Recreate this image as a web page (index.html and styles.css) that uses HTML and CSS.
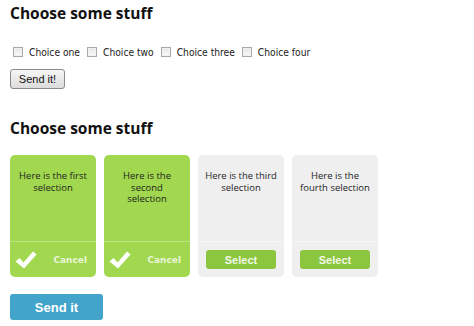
FILE: index.html
```html
<!DOCTYPE html>
<html>
<head>
<meta charset="utf-8">
<link rel="stylesheet" href="styles.css">
</head>
<body>
<div class="page">
  <h1 class="title">Choose some stuff</h1>
  <form class="plain-form">
    <div class="choices">
      <label class="choice"><span class="box"></span>Choice one</label>
      <label class="choice"><span class="box"></span>Choice two</label>
      <label class="choice"><span class="box"></span>Choice three</label>
      <label class="choice"><span class="box"></span>Choice four</label>
    </div>
    <button type="button" class="classic-btn">Send it!</button>
  </form>

  <h2 class="title second">Choose some stuff</h2>
  <div class="cards">
    <div class="card selected">
      <div class="card-text">Here is the first selection</div>
      <div class="card-foot">
        <svg class="check" viewBox="0 0 22 18" width="22" height="18"><path d="M0.5 10.5 L4.5 7 L8.5 11.5 L18 0.5 L21.5 3.5 L9 17.5 Z" fill="#fff"/></svg>
        <span class="cancel">Cancel</span>
      </div>
    </div>
    <div class="card selected">
      <div class="card-text">Here is the second selection</div>
      <div class="card-foot">
        <svg class="check" viewBox="0 0 22 18" width="22" height="18"><path d="M0.5 10.5 L4.5 7 L8.5 11.5 L18 0.5 L21.5 3.5 L9 17.5 Z" fill="#fff"/></svg>
        <span class="cancel">Cancel</span>
      </div>
    </div>
    <div class="card">
      <div class="card-text">Here is the third selection</div>
      <div class="card-foot">
        <span class="select-btn">Select</span>
      </div>
    </div>
    <div class="card">
      <div class="card-text">Here is the fourth selection</div>
      <div class="card-foot">
        <span class="select-btn">Select</span>
      </div>
    </div>
  </div>
  <button type="button" class="blue-btn">Send it</button>
</div>
</body>
</html>
```

FILE: styles.css
```css
html, body {
  margin: 0;
  padding: 0;
  background: #fff;
}
.page {
  padding: 0 10px;
  font-family: "Open Sans", sans-serif;
  color: #222;
}
.title {
  margin: 0;
  font-family: "Open Sans", sans-serif;
  font-weight: bold;
  font-size: 15.5px;
  line-height: 18px;
  padding-top: 4px;
  color: #111;
}
.second {
  padding-top: 0;
  margin-top: 30px;
}
.plain-form {
  margin-top: 23px;
}
.choices {
  display: flex;
  align-items: center;
  gap: 7px;
  padding-left: 3px;
  font-family: "DejaVu Sans Condensed", "DejaVu Sans", sans-serif;
  font-stretch: condensed;
  font-size: 10.2px;
  height: 14px;
}
.choice {
  display: flex;
  align-items: center;
  gap: 6px;
  color: #222;
}
.box {
  width: 8px;
  height: 8px;
  border: 1px solid #a9a9a9;
  background: linear-gradient(#e4e4e4, #fbfbfb);
  box-shadow: inset 0 0 0 1px #f2f2f2;
}
.classic-btn {
  display: block;
  margin-top: 10px;
  width: 55px;
  height: 20px;
  padding: 0;
  font-family: "Liberation Sans", sans-serif;
  font-size: 11px;
  color: #111;
  border: 1px solid #8a8a8a;
  border-radius: 3px;
  background: linear-gradient(#f6f6f6, #dcdcdc);
}
.cards {
  display: flex;
  gap: 8px;
  margin-top: 18px;
}
.card {
  width: 86px;
  height: 122px;
  border-radius: 5px;
  background: #efefef;
  display: flex;
  flex-direction: column;
}
.card.selected {
  background: #a1d84f;
}
.card-text {
  flex: 1;
  padding: 15px 6.5px 0;
  text-align: center;
  font-family: "Open Sans", sans-serif;
  font-size: 9.5px;
  line-height: 11.5px;
  color: #1e1e1e;
}
.card-foot {
  height: 35px;
  border-top: 1px solid rgba(255,255,255,0.3);
  display: flex;
  align-items: center;
  justify-content: center;
}
.card.selected .card-foot {
  justify-content: space-between;
  padding: 0 9px 0 5px;
}
.card:not(.selected) .card-foot {
  border-top-color: #f6f6f6;
}
.check {
  display: block;
}
.cancel {
  font-family: "DejaVu Sans", sans-serif;
  font-weight: bold;
  font-size: 9px;
  color: #eaf5da;
}
.select-btn {
  width: 70px;
  height: 19px;
  border-radius: 3px;
  background: #8cc63e;
  color: #f2f8e8;
  font-family: "Liberation Sans", sans-serif;
  font-weight: bold;
  font-size: 11px;
  display: flex;
  align-items: center;
  justify-content: center;
}
.blue-btn {
  display: block;
  margin-top: 17px;
  width: 93px;
  height: 26px;
  border: none;
  border-radius: 3px;
  background: #43a4cb;
  color: #fff;
  font-family: "Liberation Sans", sans-serif;
  font-weight: bold;
  font-size: 13px;
}
```
